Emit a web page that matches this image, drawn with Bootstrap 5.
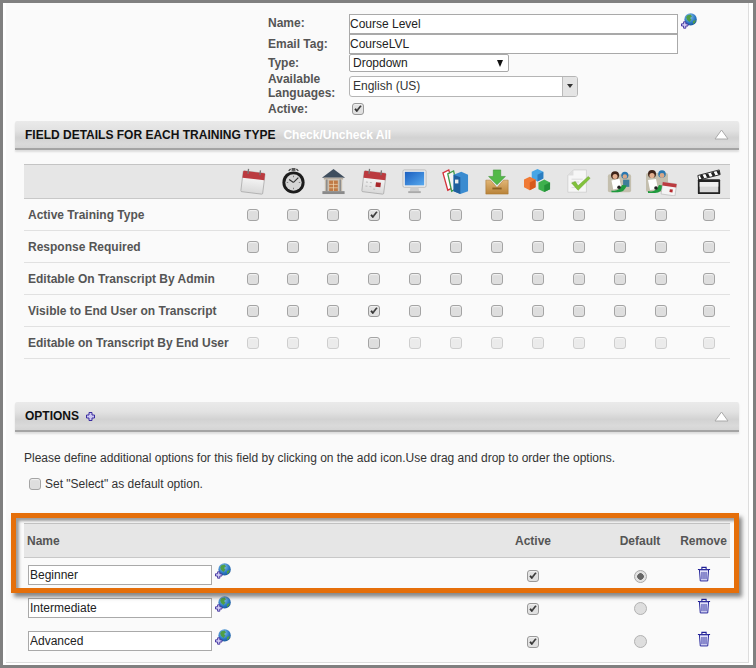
<!DOCTYPE html>
<html lang="en"><head><meta charset="utf-8"><title>Course Level</title>
<link href="https://cdn.jsdelivr.net/npm/bootstrap@5.3.0/dist/css/bootstrap.min.css" rel="stylesheet">
<style>
html,body{margin:0;background:#fff;height:668px;overflow:hidden}
body{font-family:"Liberation Sans",Arial,sans-serif;font-size:12px;color:#333}
.frame{width:756px;height:668px;border:3px solid #808080;background:#fff;padding:0 4px 2px 3px;position:relative}
.inner{height:100%;background:#fafafa;border-right:1px solid #ddd;border-bottom:1px solid #ddd;padding:11px 0 0 9px}
.fieldgrid{margin-left:253px;display:grid;grid-template-columns:81px 1fr;color:#555;font-weight:700;line-height:14px}
.fieldgrid>div{display:flex;align-items:center}
.namelab{padding-bottom:2px}
.lanlab{padding-bottom:2px}
.txt{border:1px solid #a9a9a9;background:#fff;height:20px;padding:0 1px;font:12px "Liberation Sans",sans-serif;color:#222;border-radius:0;box-shadow:none}
.txt:focus{box-shadow:none;border-color:#a9a9a9}
.w329{width:329px;padding:0}
.sel{width:160px;height:18px;border:1px solid #a9a9a9;background:#fff;border-radius:2px;font:12px "Liberation Sans",sans-serif;color:#222;padding:0 3px;justify-content:space-between}
.tri{width:0;height:0;border-left:3.5px solid transparent;border-right:3.5px solid transparent;border-top:7px solid #111;margin-right:2px}
.lang{width:229px;height:21px;border:1px solid #b5b5b5;border-radius:3px;background:#fff;font:12px "Liberation Sans",sans-serif;font-weight:400;color:#333;overflow:hidden;margin-bottom:2px}
.lang span{flex:1;padding-left:3px}
.lang i{align-self:stretch;background:#e4e4e4;border-left:1px solid #bbb;display:flex;align-items:center;justify-content:center;margin:0;flex:0 0 15px}
.lang i:after{content:"";border-left:3px solid transparent;border-right:3px solid transparent;border-top:4px solid #333}
.cb,.form-check-input.cb{appearance:none;-webkit-appearance:none;width:12px;height:12px;margin:0;padding:0;background-color:#dedede;background-image:none;border:1px solid #a4a4a4;border-radius:3px;vertical-align:middle;box-shadow:inset 0 1px 1px #f2f2f2;float:none;display:inline-block;opacity:1}
.cb:checked{background-color:#e0e0e0;border-color:#999;background-image:url("data:image/svg+xml,%3Csvg xmlns='http://www.w3.org/2000/svg' viewBox='0 0 12 12'%3E%3Cpath d='M2 6.5 4.6 9.6 10 2.4 8.6 2 4.8 6.8 3.4 5.3z' fill='%23333' stroke='%23333' stroke-width='.6'/%3E%3C/svg%3E");background-size:100% 100%}
.cb:disabled{opacity:.5}
.actcb{margin-left:3px}
.form-check-input.rd{width:13px;height:13px;margin:0;float:none;vertical-align:middle;background-color:#dedede;background-image:none;border:1px solid #b2b2b2;opacity:1;box-shadow:none}
.form-check-input.rd:checked{background-color:#e2e2e2;border-color:#aaa;background-image:radial-gradient(circle,#666 0 3px,#e2e2e2 3.6px)}
.secbar{width:724px;height:29px;background:linear-gradient(#eaeaea 0,#e2e2e2 35%,#d2d2d2 62%,#dadada 85%,#d4d4d4 100%);border-bottom:2px solid #a4a4a4;box-shadow:0 2px 2px #ddd;padding:0 10px;color:#111;font-weight:700;margin-top:5px;border-radius:2px 2px 0 0}
.secbar .ck{color:#fff;margin-left:8px}
.secbar.tall{height:30px;margin-top:43px}
.uptri{width:15px;height:11px;margin-left:auto}
.tt{border-collapse:collapse;table-layout:fixed;width:706px;margin:14px 0 0 9px;--bs-table-bg:transparent}
.tt th,.tt td{padding:0;text-align:center;vertical-align:middle;font-size:12px;color:#555;font-weight:700;box-shadow:none}
.tt thead tr{height:34px;background:#e6e6e6}
.tt thead{border-top:1px solid #c4c4c4;border-bottom:1px solid #c8c8c8}
.tt thead th{background:#e6e6e6;border:0}
.tt tbody tr{height:32px;border-bottom:1px solid #e1e1e1}
.tt td{border:0;background:transparent}
.tt td.rl{text-align:left;padding-left:4px;white-space:nowrap}
.ttsvg{display:block;margin:0 auto}
.ttlast{padding-left:7px!important}
.note{color:#333;margin:19px 0 0 9px;line-height:14px;font-size:12px}
.def{margin:12px 0 0 14px;color:#333;line-height:14px;display:flex;gap:4px;align-items:center}
.opt{border-collapse:collapse;table-layout:fixed;width:706px;margin:32px 0 0 9px;--bs-table-bg:transparent}
.opt th,.opt td{padding:0;text-align:center;vertical-align:middle;font-size:12px;color:#555;background:transparent;border:0;box-shadow:none}
.opt thead tr{height:34px;border-bottom:1px solid #c8c8c8;border-top:1px solid #c4c4c4;background:#e6e6e6}
.opt thead th{background:#e6e6e6;font-weight:700}
.opt tbody tr{height:33px}
.opt tbody td{padding-top:2px}
.opt td.nm{text-align:left;padding-left:4px}
.opt th.nm{text-align:left;padding-left:3px}
.opt .dfl{padding-left:32px}
.opt .rmv{padding-left:1px}
.opt .txt{width:184px;height:20px;color:#222;display:inline-block;vertical-align:middle;padding:0 1px}
.opt .gl{vertical-align:top;margin:-2px 0 0 3px}
.opt .trsh{vertical-align:middle;margin-top:-5px}
.orange{position:absolute;left:8px;top:510px;width:728px;height:80px;border:5px solid #e56f0a;box-shadow:3px 4px 4px rgba(60,60,60,.6),inset 3px 3px 3px rgba(80,80,80,.55);pointer-events:none}
.plus{vertical-align:-1px;margin-left:7px}
.namerow .gl{margin:-7px 0 0 3px}
</style></head>
<body>
<svg width="0" height="0" class="position-absolute">
<defs>
<radialGradient id="gb" cx=".4" cy=".3" r=".8"><stop offset="0" stop-color="#8fc7ee"/><stop offset=".6" stop-color="#2b78c2"/><stop offset="1" stop-color="#174f8e"/></radialGradient>
<linearGradient id="pap" x1="0" y1="0" x2="0" y2="1"><stop offset="0" stop-color="#fff"/><stop offset="1" stop-color="#d9d9d9"/></linearGradient>
<linearGradient id="scr" x1="0" y1="0" x2="1" y2="1"><stop offset="0" stop-color="#1b5fc0"/><stop offset="1" stop-color="#57a9ee"/></linearGradient>
<linearGradient id="box" x1="0" y1="0" x2="0" y2="1"><stop offset="0" stop-color="#e2b676"/><stop offset="1" stop-color="#b98339"/></linearGradient>
<symbol id="globe" viewBox="0 0 16 16">
<circle cx="9.6" cy="6.4" r="6.2" fill="url(#gb)"/>
<path d="M6 2.600 9.500 1.600 11 3.400 9 5 10.500 6.400 8.500 9 6.200 7 5.200 4.500zM12 8 14.800 7 14 9.500 12 11z" fill="#4f9f45"/>
<path d="M2.600 8.800h2.200v2H7v2.200H4.800v2.200H2.600V13H.5v-2.200h2.100z" fill="#d3cef4" stroke="#3c2d9c" stroke-width=".9"/>
</symbol>
<symbol id="trash" viewBox="0 0 13 15">
<path d="M.8 3.200h11.400M4.500 3V1.300h4V3" fill="none" stroke="#1e1e96" stroke-width="1"/>
<path d="M2.200 3.600h8.600L10 14H3z" fill="#eeeeff" stroke="#1e1e96" stroke-width=".9"/>
<path d="M4.600 5.500v7M6.500 5.500v7M8.400 5.500v7" stroke="#1e1e96" stroke-width=".9"/>
</symbol>
<symbol id="cal1" viewBox="0 0 28 28">
<g transform="rotate(7 14 14)"><rect x="3" y="4" width="22" height="21" rx="1" fill="url(#pap)" stroke="#999" stroke-width=".6"/><path d="M3 5q0-1 1-1h20q1 0 1 1v6H3z" fill="#bb3b40"/><path d="M8 1.500v5M20 1.500v5" stroke="#777" stroke-width="1.300"/></g>
</symbol>
<symbol id="cal2" viewBox="0 0 28 28">
<g transform="rotate(7 14 14)"><rect x="3" y="4" width="22" height="21" rx="1" fill="url(#pap)" stroke="#999" stroke-width=".6"/><path d="M3 5q0-1 1-1h20q1 0 1 1v6H3z" fill="#bb3b40"/><path d="M8 1.500v5M20 1.500v5" stroke="#777" stroke-width="1.300"/><rect x="16" y="14" width="5" height="4.500" fill="#a8262a"/><path d="M6 15h2M10 15h2M6 19h2M10 19h2M14 21h2" stroke="#bbb" stroke-width="1"/></g>
</symbol>
<symbol id="watch" viewBox="0 0 28 28">
<path d="M9 3 11 1M19 3 17 1" stroke="#444" stroke-width="1.400"/><rect x="12" y="0" width="4" height="3" fill="#555"/>
<circle cx="14" cy="15" r="11.500" fill="#1c1c1c"/><circle cx="14" cy="15" r="8.500" fill="#d5d5d5"/>
<path d="M14 15 9.500 12M14 15 19 10" stroke="#333" stroke-width="1.200"/><path d="M14 8v1.500M14 20.500V22M7 15h1.500M19.500 15H21" stroke="#777"/>
</symbol>
<symbol id="bank" viewBox="0 0 28 28">
<path d="M14 1 26 10H2z" fill="#3f4e5e"/><rect x="4" y="10" width="20" height="2" fill="#b7ada0"/>
<rect x="5" y="12" width="18" height="12" fill="#c9bfb0"/><rect x="9.500" y="13" width="9" height="11" fill="#c07a45"/><path d="M14 13v11M9.500 17h9M9.500 20.500h9" stroke="#edd9b8" stroke-width=".7"/><path d="M7 12v12M21 12v12" stroke="#8d8d8d" stroke-width="1.600"/>
<rect x="2.500" y="24" width="23" height="3" fill="#8a8a8a"/>
</symbol>
<symbol id="monitor" viewBox="0 0 28 28">
<rect x="2" y="2" width="24" height="18" rx="1.500" fill="#eee" stroke="#bbb"/><rect x="4" y="4" width="20" height="14" fill="url(#scr)"/><path d="M10 20h8l1 4H9z" fill="#ccc"/><rect x="7.500" y="24" width="13" height="2" fill="#aaa"/>
</symbol>
<symbol id="binders" viewBox="0 0 28 28">
<path d="M1 5 7 2 12 20 6 23z" fill="#fff" stroke="#d4343c" stroke-width="1.400"/>
<path d="M6 6 12 3 16 21 10 24z" fill="#f4f4f4" stroke="#3f9c4c" stroke-width="1.400"/>
<path d="M12 7 20 4 27 7V24L19 27 12 24z" fill="#3a8bd0"/><path d="M12 7 19 9.500V27L12 24z" fill="#1f5f9e"/><rect x="13.500" y="12" width="3.500" height="4" fill="#eee"/>
</symbol>
<symbol id="inbox" viewBox="0 0 28 28">
<path d="M10 1h8v7h5l-9 9-9-9h5z" fill="#53b948" stroke="#3b9234" stroke-width=".6"/>
<path d="M2 12h5l7 8 7-8h5v15H2z" fill="url(#box)" stroke="#a8762f" stroke-width=".6"/><path d="M9 20h10v2H9z" fill="#8b5f22"/>
</symbol>
<symbol id="cubes" viewBox="0 0 28 28">
<path d="M14 1 20 4V11L14 14 8 11V4z" fill="#48a6e6"/><path d="M14 7 20 4V11L14 14z" fill="#2b7dc0"/>
<path d="M6 9 12 12V20L6 23 0 20V12z" fill="#f07a35"/><path d="M6 15 12 12V20L6 23z" fill="#d65a1c"/>
<path d="M21 12 27 15V22L21 25 15 22V15z" fill="#3eb04d"/><path d="M21 18 27 15V22L21 25z" fill="#249038"/>
</symbol>
<symbol id="doc" viewBox="0 0 28 28">
<path d="M8 1h14v24H2V7z" fill="#f6f6f6" stroke="#ccc" stroke-width=".8"/><path d="M8 1v6H2z" fill="#ddd"/><path d="M6 11h12M6 14h8M6 20h7" stroke="#d8d8d8"/>
<path d="M6 15 10 13.500 13 18 24 8 26 10 13 23z" fill="#82c23b" stroke="#5c9a21" stroke-width=".5"/>
</symbol>
<symbol id="people" viewBox="0 0 28 26">
<rect x="1" y="5" width="26" height="20" rx="2" fill="#c4bfae"/>
<circle cx="9" cy="6" r="4.500" fill="#3f2419"/><circle cx="9" cy="7.500" r="2.800" fill="#e4b090"/>
<circle cx="20" cy="6" r="4" fill="#2a78b0"/><circle cx="20" cy="7.500" r="2.500" fill="#d8a888"/>
<path d="M5 12 14 10 16 20 7 22z" fill="#fff"/><path d="M18 11h7v8h-7z" fill="#3f7e9a"/>
<path d="M5 23q8 2 12-6l5 .5Q20 25 12 25H5z" fill="#1f9a3e"/><circle cx="13.500" cy="19.500" r="2" fill="#222"/>
</symbol>
<symbol id="people2" viewBox="0 0 32 28">
<rect x="1" y="5" width="22" height="19" rx="2" fill="#c4bfae"/>
<circle cx="7" cy="6" r="4" fill="#3f2419"/><circle cx="7" cy="7.500" r="2.600" fill="#e4b090"/>
<circle cx="17" cy="6" r="3.800" fill="#2a78b0"/><circle cx="17" cy="7.500" r="2.400" fill="#d8a888"/>
<path d="M3 12 11 11 13 21 5 22z" fill="#fff"/><path d="M3 23q8 2 11-6l4 .5Q17 25 10 25H3z" fill="#1f9a3e"/><circle cx="11" cy="20" r="1.800" fill="#222"/>
<g transform="rotate(8 24 20)"><rect x="17" y="15" width="14" height="12" fill="#f4f4f4" stroke="#aaa" stroke-width=".5"/><rect x="17" y="15" width="14" height="3.500" fill="#bb3b40"/><rect x="25" y="21" width="3" height="3" fill="#b52a2e"/></g>
</symbol>
<symbol id="clap" viewBox="0 0 28 28">
<path d="M2 7 25 1 26 6 3 12z" fill="#fff" stroke="#222"/><path d="M4 7l3-1 2 4-3 1zM10 5.500l3-1 2 4-3 1zM16 4l3-1 2 4-3 1zM22 2.500l3-.8 1 4-2 .5z" fill="#222"/>
<rect x="2" y="11" width="24" height="16" rx="1" fill="#222"/><rect x="4" y="14" width="20" height="11" fill="#d7d7d7"/><rect x="4" y="14" width="20" height="5" fill="#eee"/>
</symbol>
</defs></svg>
<div class="frame"><div class="inner">
<div class="fieldgrid">
<div class="namelab">Name:</div><div class="namerow"><input class="form-control txt w329" value="Course Level"><svg class="gl" width="16" height="16"><use href="#globe"/></svg></div>
<div>Email Tag:</div><div><input class="form-control txt w329" value="CourseLVL"></div>
<div>Type:</div><div><div class="sel d-flex align-items-center">Dropdown<span class="tri"></span></div></div>
<div class="lanlab">Available Languages:</div><div><div class="lang d-flex"><span class="align-self-center">English (US)</span><i></i></div></div>
<div>Active:</div><div><input type="checkbox" class="cb actcb" checked></div>
</div>

<div class="secbar d-flex align-items-center"><span>FIELD DETAILS FOR EACH TRAINING TYPE</span><span class="ck">Check/Uncheck All</span>
<svg class="uptri" viewBox="0 0 15 11"><path d="M7.5 1 14 10H1z" fill="#fff" stroke="#aaa"/></svg></div>

<table class="table tt"><colgroup><col style="width:209px"><col style="width:40px"><col style="width:40px"><col style="width:40px"><col style="width:41px"><col style="width:41px"><col style="width:41px"><col style="width:41px"><col style="width:41px"><col style="width:41px"><col style="width:41px"><col style="width:41px"><col></colgroup>
<thead><tr><th></th>
<th><svg class="ttsvg" width="28" height="28"><use href="#cal1"/></svg></th>
<th><svg class="ttsvg" width="27" height="27"><use href="#watch"/></svg></th>
<th><svg class="ttsvg" width="27" height="27"><use href="#bank"/></svg></th>
<th><svg class="ttsvg" width="28" height="28"><use href="#cal2"/></svg></th>
<th><svg class="ttsvg" width="27" height="27"><use href="#monitor"/></svg></th>
<th><svg class="ttsvg" width="27" height="27"><use href="#binders"/></svg></th>
<th><svg class="ttsvg" width="26" height="26"><use href="#inbox"/></svg></th>
<th><svg class="ttsvg" width="27" height="27"><use href="#cubes"/></svg></th>
<th><svg class="ttsvg" width="26" height="26"><use href="#doc"/></svg></th>
<th><svg class="ttsvg" width="25" height="25"><use href="#people"/></svg></th>
<th><svg class="ttsvg" width="32" height="28"><use href="#people2"/></svg></th>
<th class="ttlast"><svg class="ttsvg" width="26" height="26"><use href="#clap"/></svg></th></tr></thead>
<tbody id="rows"></tbody></table>

<div class="secbar tall d-flex align-items-center"><span>OPTIONS</span><svg class="plus" width="9" height="9" viewBox="0 0 9 9"><path d="M3 .5h3v2.500h2.500v3H6v2.500H3V6H.5V3H3z" fill="#cfcaf2" stroke="#3a2ca0"/></svg>
<svg class="uptri" viewBox="0 0 15 11"><path d="M7.5 1 14 10H1z" fill="#fff" stroke="#aaa"/></svg></div>

<p class="note">Please define additional options for this field by clicking on the add icon.Use drag and drop to order the options.</p>
<div class="def"><input type="checkbox" class="cb"> <span>Set "Select" as default option.</span></div>

<table class="table opt"><colgroup><col style="width:470px"><col style="width:78px"><col style="width:104px"><col></colgroup>
<thead><tr><th class="nm">Name</th><th>Active</th><th class="dfl">Default</th><th class="rmv">Remove</th></tr></thead>
<tbody>
<tr><td class="nm"><input class="form-control txt" value="Beginner"><svg class="gl" width="16" height="16"><use href="#globe"/></svg></td><td><input type="checkbox" class="cb" checked></td><td class="dfl"><input type="radio" name="dv" class="form-check-input rd" checked></td><td class="rmv"><svg width="14" height="16" class="trsh"><use href="#trash"/></svg></td></tr>
<tr><td class="nm"><input class="form-control txt" value="Intermediate"><svg class="gl" width="16" height="16"><use href="#globe"/></svg></td><td><input type="checkbox" class="cb" checked></td><td class="dfl"><input type="radio" name="dv" class="form-check-input rd"></td><td class="rmv"><svg width="14" height="16" class="trsh"><use href="#trash"/></svg></td></tr>
<tr><td class="nm"><input class="form-control txt" value="Advanced"><svg class="gl" width="16" height="16"><use href="#globe"/></svg></td><td><input type="checkbox" class="cb" checked></td><td class="dfl"><input type="radio" name="dv" class="form-check-input rd"></td><td class="rmv"><svg width="14" height="16" class="trsh"><use href="#trash"/></svg></td></tr>
</tbody></table>
</div>
<div class="orange"></div>
</div>
<script>
var data=[["Active Training Type",[3],0],["Response Required",[],0],["Editable On Transcript By Admin",[],0],["Visible to End User on Transcript",[3],0],["Editable on Transcript By End User",[],1]];
var h="";data.forEach(function(r){h+='<tr><td class="rl">'+r[0]+'</td>';for(var i=0;i<12;i++){var on=r[1].indexOf(i)>=0;var dis=r[2]&&i!==3;h+='<td'+(i==11?' class="ttlast"':'')+'><input type="checkbox" class="cb"'+(on?' checked':'')+(dis?' disabled':'')+'></td>';}h+='</tr>';});document.getElementById("rows").innerHTML=h;
</script>
<script src="https://cdn.jsdelivr.net/npm/bootstrap@5.3.0/dist/js/bootstrap.bundle.min.js"></script>
</body></html>
